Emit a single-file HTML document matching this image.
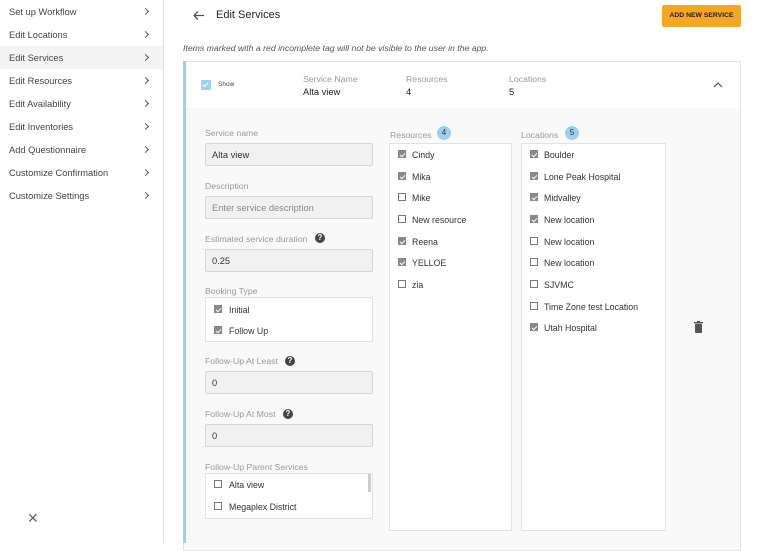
<!DOCTYPE html><html><head><style>
*{box-sizing:border-box;margin:0;padding:0}
body{width:762px;height:543px;overflow:hidden;background:#fff;font-family:"Liberation Sans",sans-serif;color:#333;position:relative}
.a{position:absolute}
.nav{left:0;width:163px;height:23px;font-size:9.3px;color:#444;padding-left:9px;line-height:24px}
.nav.sel{background:#f4f4f4}
.nav:after{content:"";position:absolute;right:15px;top:9px;width:4px;height:4px;border-right:1.3px solid #555;border-top:1.3px solid #555;transform:rotate(45deg)}
.lbl{font-size:8.7px;color:#999;margin-top:1px}
.inp{left:205px;width:168px;height:23px;background:#f1f1f1;border:1px solid #d6d6d6;border-radius:2px;font-size:9.3px;padding-left:6px;line-height:22px;color:#333}
.cb{width:8px;height:8px;border:1px solid #777;background:#fff}
.cb.on{background:#888;border-color:#888}
.cb.on:after{content:"";position:absolute;left:2px;top:0.5px;width:2px;height:4px;border:solid #fff;border-width:0 1px 1px 0;transform:rotate(45deg)}
.it{font-size:8.8px;color:#333;margin-top:1px}
.q{width:10px;height:10px;border-radius:50%;background:#444;color:#fff;font-size:8px;font-weight:bold;text-align:center;line-height:10px}
.badge{width:14px;height:14px;border-radius:50%;background:#9ecff0;font-size:8px;text-align:center;line-height:14px;color:#333}
</style></head><body>
<div class="a" style="left:163px;top:0;width:1px;height:543px;background:#e4e4e4"></div>
<div class="a nav" style="top:0">Set up Workflow</div>
<div class="a nav" style="top:23px">Edit Locations</div>
<div class="a nav sel" style="top:46px">Edit Services</div>
<div class="a nav" style="top:69px">Edit Resources</div>
<div class="a nav" style="top:92px">Edit Availability</div>
<div class="a nav" style="top:115px">Edit Inventories</div>
<div class="a nav" style="top:138px">Add Questionnaire</div>
<div class="a nav" style="top:161px">Customize Confirmation</div>
<div class="a nav" style="top:184px">Customize Settings</div>
<div class="a" style="left:27px;top:510px;font-size:14px;color:#666">✕</div>

<svg class="a" style="left:192px;top:10px" width="13" height="11" viewBox="0 0 13 11"><path d="M12 5.5H2M6 1.5L2 5.5 6 9.5" stroke="#555" stroke-width="1.3" fill="none"/></svg>
<div class="a" style="left:216px;top:9px;font-size:11px;color:#222">Edit Services</div>
<div class="a" style="left:662px;top:5px;width:79px;height:22px;background:#f5a623;border-radius:2px;font-size:6.8px;font-weight:bold;text-align:center;line-height:22px;color:#222">ADD NEW SERVICE</div>
<div class="a" style="left:183px;top:43px;font-size:8.7px;font-style:italic;color:#555">Items marked with a red incomplete tag will not be visible to the user in the app.</div>

<div class="a" style="left:183px;top:61px;width:558px;height:490px;border:1px solid #e2e2e2;background:#f9f9f9"></div>
<div class="a" style="left:184px;top:62px;width:556px;height:46px;background:#fff"></div>
<div class="a" style="left:183px;top:61px;width:3px;height:482px;background:#9ecff0"></div>
<div class="a" style="left:201px;top:80px;width:10px;height:10px;background:#9ecff0;border-radius:1px"></div>
<div class="a" style="left:204px;top:81px;width:3px;height:6px;border:solid #fff;border-width:0 1.2px 1.2px 0;transform:rotate(45deg)"></div>
<div class="a" style="left:218px;top:81px;font-size:6.5px;color:#444">Show</div>
<div class="a lbl" style="left:303px;top:73px">Service Name</div>
<div class="a" style="left:303px;top:87px;font-size:9.3px;color:#222">Alta view</div>
<div class="a lbl" style="left:406px;top:73px">Resources</div>
<div class="a" style="left:406px;top:87px;font-size:9.3px;color:#222">4</div>
<div class="a lbl" style="left:509px;top:73px">Locations</div>
<div class="a" style="left:509px;top:87px;font-size:9.3px;color:#222">5</div>
<svg class="a" style="left:713px;top:81px" width="10" height="7"><path d="M1 6L5 2 9 6" stroke="#555" stroke-width="1.2" fill="none"/></svg>

<div class="a lbl" style="left:205px;top:127px">Service name</div>
<div class="a inp" style="top:143px">Alta view</div>
<div class="a lbl" style="left:205px;top:180px">Description</div>
<div class="a inp" style="top:196px;color:#888">Enter service description</div>
<div class="a lbl" style="left:205px;top:233px">Estimated service duration</div>
<div class="a q" style="left:315px;top:233px">?</div>
<div class="a inp" style="top:249px">0.25</div>
<div class="a lbl" style="left:205px;top:285px">Booking Type</div>
<div class="a" style="left:205px;top:297px;width:168px;height:45px;background:#fff;border:1px solid #e2e2e2"></div>
<div class="a cb on" style="left:214px;top:305px"></div><div class="a it" style="left:229px;top:304px">Initial</div>
<div class="a cb on" style="left:214px;top:326px"></div><div class="a it" style="left:229px;top:325px">Follow Up</div>
<div class="a lbl" style="left:205px;top:355px">Follow-Up At Least</div>
<div class="a q" style="left:285px;top:356px">?</div>
<div class="a inp" style="top:371px">0</div>
<div class="a lbl" style="left:205px;top:408px">Follow-Up At Most</div>
<div class="a q" style="left:283px;top:409px">?</div>
<div class="a inp" style="top:424px">0</div>
<div class="a lbl" style="left:205px;top:461px">Follow-Up Parent Services</div>
<div class="a" style="left:205px;top:473px;width:168px;height:46px;background:#fff;border:1px solid #e2e2e2"></div>
<div class="a" style="left:368px;top:474px;width:3px;height:18px;background:#ccc"></div>
<div class="a cb" style="left:214px;top:480px"></div><div class="a it" style="left:229px;top:479px">Alta view</div>
<div class="a cb" style="left:214px;top:502px"></div><div class="a it" style="left:229px;top:501px">Megaplex District</div>

<div class="a lbl" style="left:390px;top:129px">Resources</div>
<div class="a badge" style="left:437px;top:126px">4</div>
<div class="a" style="left:389px;top:143px;width:123px;height:388px;background:#fff;border:1px solid #e2e2e2"></div>
<div class="a cb on" style="left:398px;top:150px"></div><div class="a it" style="left:412px;top:149px">Cindy</div>
<div class="a cb on" style="left:398px;top:172px"></div><div class="a it" style="left:412px;top:171px">Mika</div>
<div class="a cb" style="left:398px;top:193px"></div><div class="a it" style="left:412px;top:192px">Mike</div>
<div class="a cb" style="left:398px;top:215px"></div><div class="a it" style="left:412px;top:214px">New resource</div>
<div class="a cb on" style="left:398px;top:237px"></div><div class="a it" style="left:412px;top:236px">Reena</div>
<div class="a cb on" style="left:398px;top:258px"></div><div class="a it" style="left:412px;top:257px">YELLOE</div>
<div class="a cb" style="left:398px;top:280px"></div><div class="a it" style="left:412px;top:279px">zia</div>

<div class="a lbl" style="left:521px;top:129px">Locations</div>
<div class="a badge" style="left:565px;top:126px">5</div>
<div class="a" style="left:521px;top:143px;width:145px;height:388px;background:#fff;border:1px solid #e2e2e2"></div>
<div class="a cb on" style="left:530px;top:150px"></div><div class="a it" style="left:544px;top:149px">Boulder</div>
<div class="a cb on" style="left:530px;top:172px"></div><div class="a it" style="left:544px;top:171px">Lone Peak Hospital</div>
<div class="a cb on" style="left:530px;top:193px"></div><div class="a it" style="left:544px;top:192px">Midvalley</div>
<div class="a cb on" style="left:530px;top:215px"></div><div class="a it" style="left:544px;top:214px">New location</div>
<div class="a cb" style="left:530px;top:237px"></div><div class="a it" style="left:544px;top:236px">New location</div>
<div class="a cb" style="left:530px;top:258px"></div><div class="a it" style="left:544px;top:257px">New location</div>
<div class="a cb" style="left:530px;top:280px"></div><div class="a it" style="left:544px;top:279px">SJVMC</div>
<div class="a cb" style="left:530px;top:302px"></div><div class="a it" style="left:544px;top:301px">Time Zone test Location</div>
<div class="a cb on" style="left:530px;top:323px"></div><div class="a it" style="left:544px;top:322px">Utah Hospital</div>
<svg class="a" style="left:694px;top:321px" width="9" height="12" viewBox="0 0 9 12"><rect x="0" y="1" width="9" height="1.5" fill="#555"/><rect x="3" y="0" width="3" height="1.5" fill="#555"/><rect x="1" y="3" width="7" height="9" rx="0.8" fill="#555"/></svg>
</body></html>
